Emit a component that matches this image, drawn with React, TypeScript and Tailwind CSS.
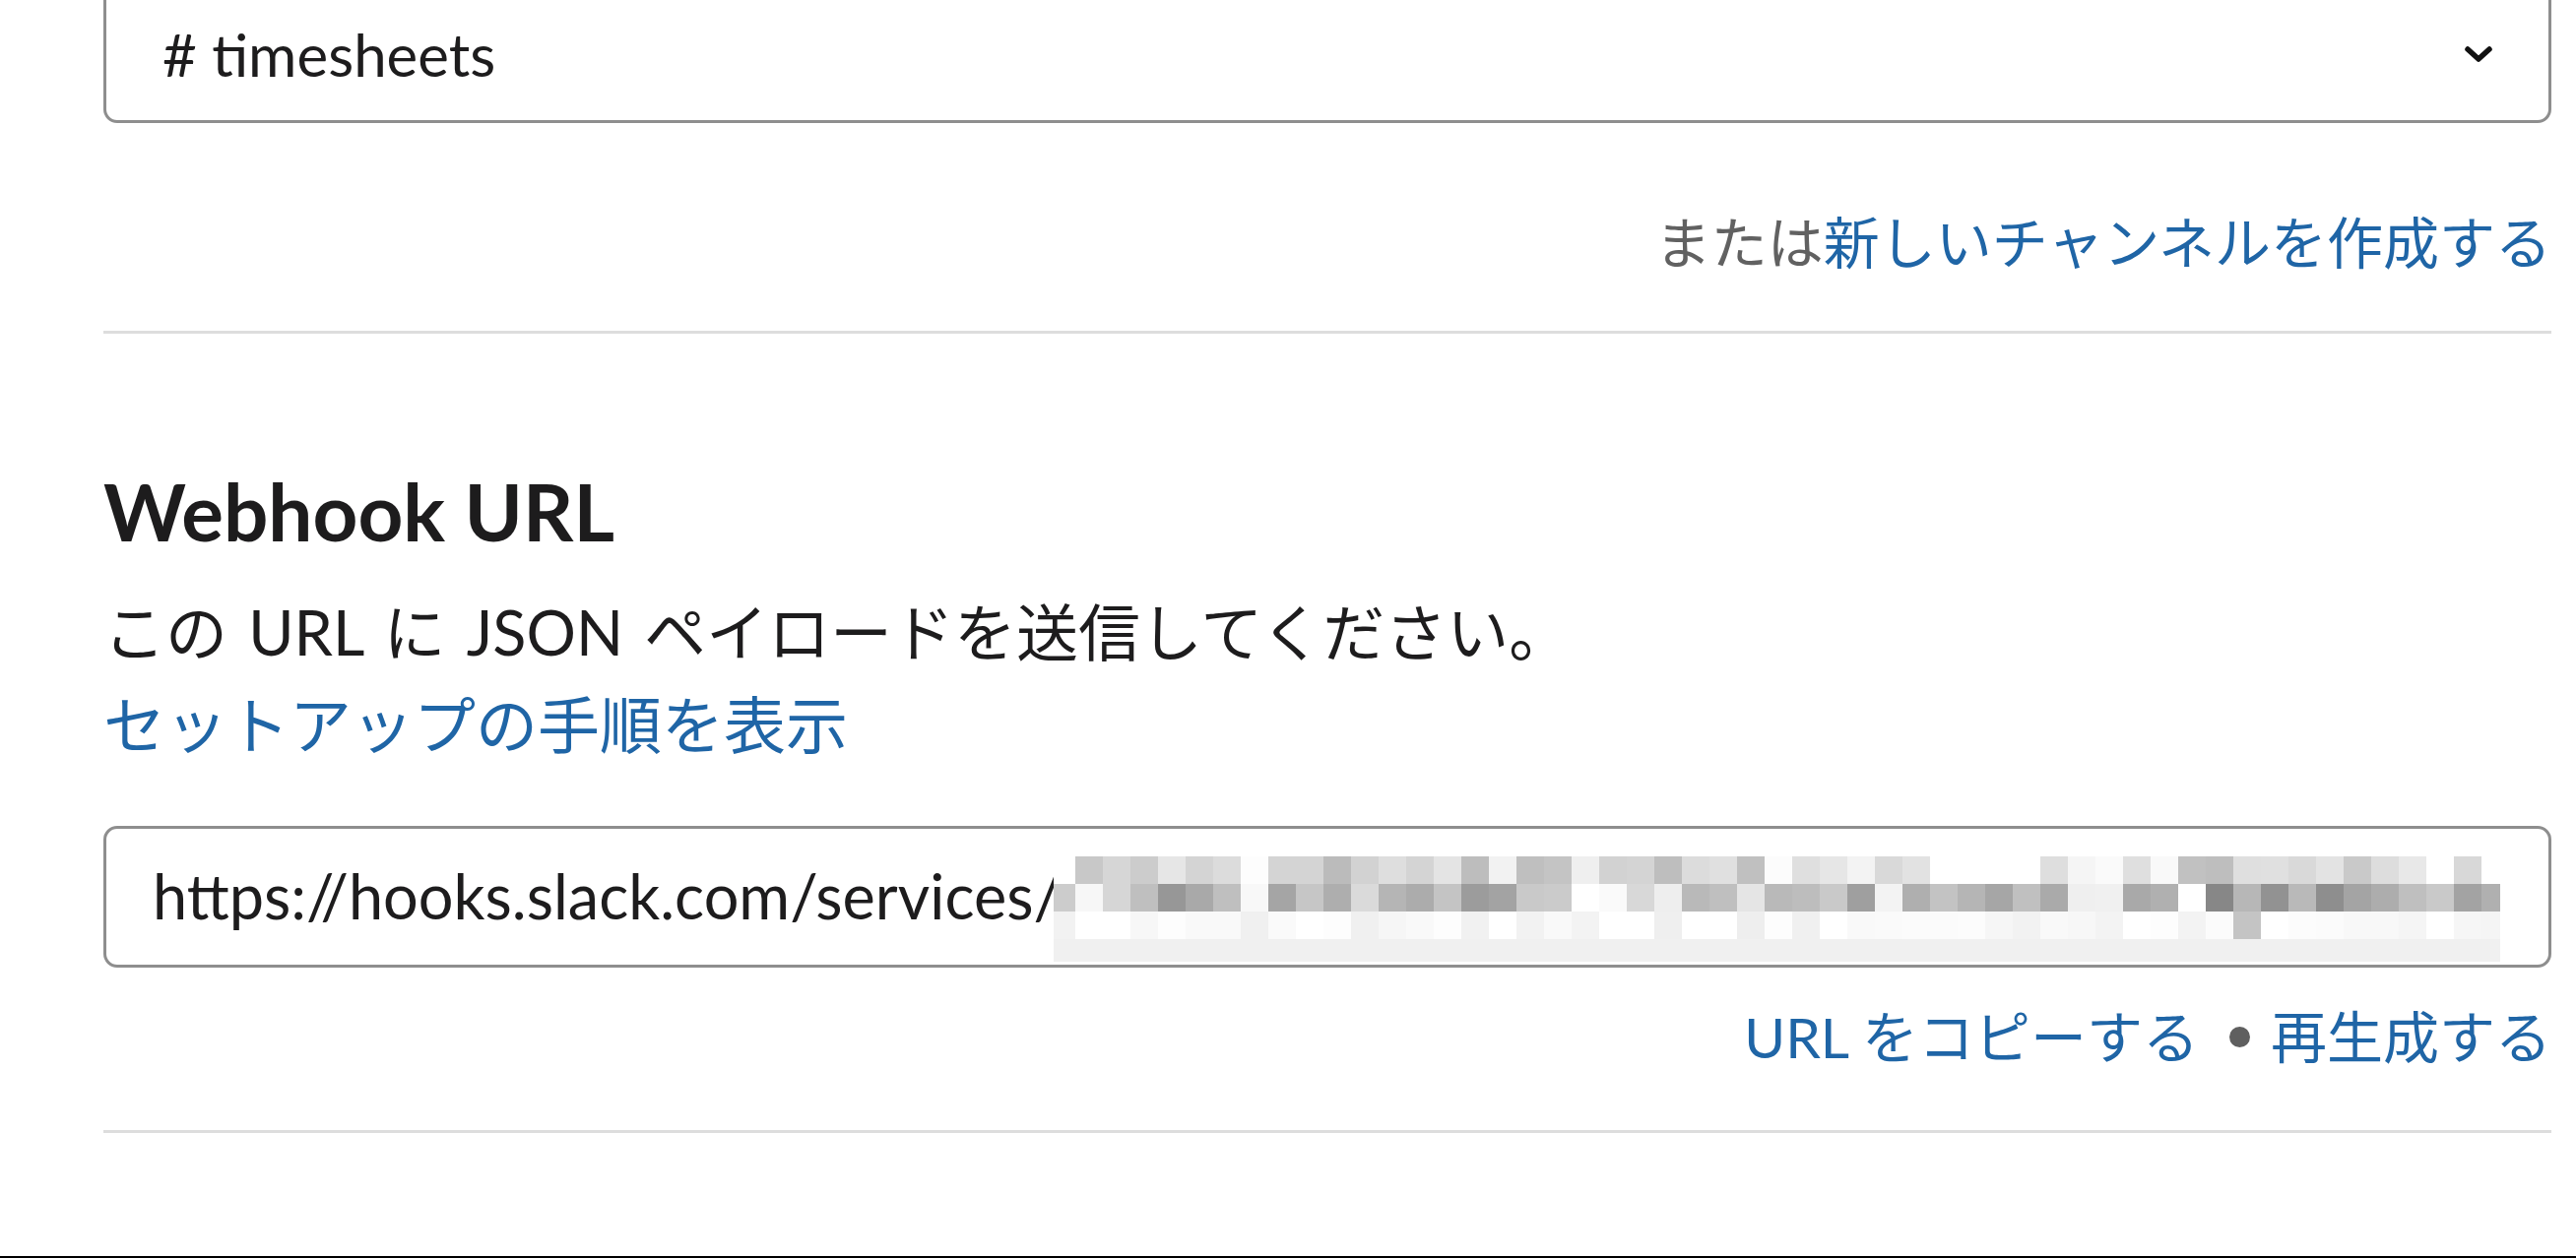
import React from 'react'

// pixelated (mosaic) part of the webhook URL, one string per row, grey levels in hex
const MOSAIC_ROWS = [
  'ff c8 d6 cc e6 d4 dc fd d4 d4 bb d2 de d4 e4 bd f2 bf c4 ef d2 d4 be dc e0 c0 fc df e6 f3 d9 e2 ff ff ff ff de f5 fa df f9 c1 be df e0 d9 e3 c9 dd e8 ff d8 ff',
  'cc f7 d6 bf 97 a9 bf f8 a5 c6 ae da b5 ac c4 9c a3 c9 cb ff fa d8 ee b9 bf e5 b9 bd c9 9f f3 af c3 b5 a6 c0 aa ef f0 a9 b0 ff 87 b7 92 b9 8e a4 ad bf c9 a3 b0',
  'f2 ff ff f7 fd f9 f9 f0 fa ff fd f0 f6 f9 fd f1 ff f2 f9 f3 ff ff ef ff ff ee fd f0 ff f9 fa fb fb fc f6 f2 f9 f7 f3 ff fd f3 fb c4 ff fc fb f8 f8 f5 ff f6 f5',
]

function Mosaic() {
  return (
    <div className="absolute left-[962px] top-[28px] w-[1469px] h-[107px] bg-white overflow-hidden flex flex-col">
      {MOSAIC_ROWS.map((row, r) => (
        <div key={r} className="flex h-[28px] shrink-0">
          {row.split(' ').map((v, i) => (
            <div
              key={i}
              className={i === 0 ? 'w-[22px] h-full shrink-0' : 'w-[28px] h-full shrink-0'}
              style={{ backgroundColor: `#${v}${v}${v}` }}
            />
          ))}
        </div>
      ))}
      <div className="h-[23px] bg-[#f0f0f0] shrink-0" />
    </div>
  )
}

function Chevron() {
  return (
    <svg width="30" height="18" viewBox="0 0 30 18" fill="none">
      <polyline points="4,4 15,14 26,4" stroke="#111" strokeWidth="5.5" strokeLinecap="round" strokeLinejoin="round" />
    </svg>
  )
}

export default function App() {
  return (
    <div className="h-[1278px] bg-white flex flex-col overflow-hidden font-['Lato','Noto_Sans_CJK_JP',sans-serif] text-[#1d1c1d]">
      <div className="flex-1 pl-[105px] pr-[25px]">
        {/* channel select */}
        <div className="-mt-[15px] h-[140px] rounded-[14px] border-[3px] border-[#8e8e8e] flex items-center justify-between pl-[57px] pr-[56px]">
          <span className="text-[60px] leading-[1.5]"># timesheets</span>
          <Chevron />
        </div>

        <div className="mt-[79px] text-[57px] leading-[1.5] text-right">
          <span className="text-[#616161]">または</span>
          <span className="text-[#1f65a6]">新しいチャンネルを作成する</span>
        </div>

        <div className="mt-[46px] h-[3px] bg-[#dddddd]" />

        {/* webhook url */}
        <h2 className="mt-[130px] text-[80px] font-bold leading-[1.25]">Webhook URL</h2>
        <div className="mt-[26px] text-[63px] leading-[1.5]">
          <p className="[word-spacing:5px]">この URL に JSON ペイロードを送信してください。</p>
          <p className="text-[#1f65a6]">セットアップの手順を表示</p>
        </div>

        <div className="relative mt-[55px] h-[144px] rounded-[14px] border-[3px] border-[#8e8e8e] flex items-center pl-[47px] overflow-hidden">
          <span className="text-[63px] leading-[1.5] whitespace-nowrap">https://hooks.slack.com/services/</span>
          <Mosaic />
        </div>

        <div className="mt-[28px] text-[57px] leading-[1.5] flex justify-end items-center text-[#1f65a6]">
          <span>URL をコピーする</span>
          <span className="ml-[31px] mr-[21px] w-[21px] h-[21px] rounded-full bg-[#5f5f5f]" />
          <span>再生成する</span>
        </div>

        <div className="mt-[52px] h-[3px] bg-[#dddddd]" />
      </div>
      <div className="h-[2px] bg-black shrink-0" />
    </div>
  )
}
